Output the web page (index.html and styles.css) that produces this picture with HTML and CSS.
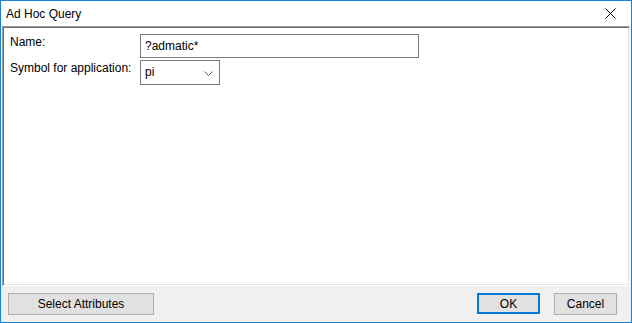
FILE: index.html
```html
<!DOCTYPE html>
<html>
<head>
<meta charset="utf-8">
<link rel="stylesheet" href="styles.css">
</head>
<body>
<div class="window">
  <div class="titlebar">
    <span class="title">Ad Hoc Query</span>
    <span class="close">
      <svg width="11" height="11" viewBox="0 0 11 11"><path d="M0.5 0.5 L10.5 10.5 M10.5 0.5 L0.5 10.5" stroke="#000" stroke-width="1" fill="none"/></svg>
    </span>
  </div>
  <div class="panel">
    <div class="form">
      <label class="label">Name:</label>
      <div class="input name-input">?admatic*</div>
      <label class="label">Symbol for application:</label>
      <div class="input select">
        <span>pi</span>
        <svg class="chev" width="9" height="5" viewBox="0 0 9 5"><path d="M0.5 0.5 L4.5 4.5 L8.5 0.5" stroke="#606060" stroke-width="1" fill="none"/></svg>
      </div>
    </div>
  </div>
  <div class="footer">
    <div class="btn attrs">Select Attributes</div>
    <div class="spacer"></div>
    <div class="btn ok">OK</div>
    <div class="btn cancel">Cancel</div>
  </div>
</div>
</body>
</html>
```
FILE: styles.css
```css
html, body {
  margin: 0;
  padding: 0;
}
body {
  font-family: "Liberation Sans", Arial, sans-serif;
  font-size: 12px;
  color: #000;
}
.window {
  width: 632px;
  height: 323px;
  box-sizing: border-box;
  border: 1px solid #1883d7;
  display: flex;
  flex-direction: column;
  background: #f0f0f0;
}
.titlebar {
  height: 25px;
  background: #fff;
  display: flex;
  align-items: center;
  flex: none;
}
.title {
  padding-left: 5px;
  padding-top: 1px;
  flex: 1;
}
.close {
  width: 45px;
  height: 25px;
  display: flex;
  align-items: center;
  justify-content: center;
  padding-left: 3px;
  box-sizing: border-box;
}
.panel {
  flex: none;
  height: 260px;
  margin: 0 1px;
  background: #fff;
  border: 1px solid;
  border-color: #a0a0a0 #fff #fff #a0a0a0;
  box-shadow: inset 1px 1px #696969, inset -1px -1px #e3e3e3;
  box-sizing: border-box;
  padding: 7px 6px 0 7px;
}
.form {
  display: grid;
  grid-template-columns: 130px auto;
  row-gap: 2px;
  justify-content: start;
}
.label {
  line-height: 16px;
  padding-top: 0;
}
.input {
  border: 1px solid #7a7a7a;
  box-sizing: border-box;
  height: 24px;
  line-height: 22px;
  padding-left: 4px;
  background: #fff;
}
.name-input {
  width: 279px;
}
.select {
  width: 80px;
  height: 25px;
  line-height: 23px;
  display: flex;
  align-items: center;
  justify-content: space-between;
  padding-right: 6px;
}
.chev {
  margin-top: 1px;
}
.footer {
  flex: 1;
  display: flex;
  align-items: flex-start;
  padding: 7px 14px 0 7px;
  gap: 14px;
}
.spacer {
  flex: 1;
}
.btn {
  height: 22px;
  box-sizing: border-box;
  border: 1px solid #adadad;
  background: #e1e1e1;
  display: flex;
  align-items: center;
  justify-content: center;
}
.attrs {
  width: 146px;
}
.ok {
  width: 63px;
  border: 2px solid #0078d7;
  height: 21px;
}
.cancel {
  width: 63px;
}
```
